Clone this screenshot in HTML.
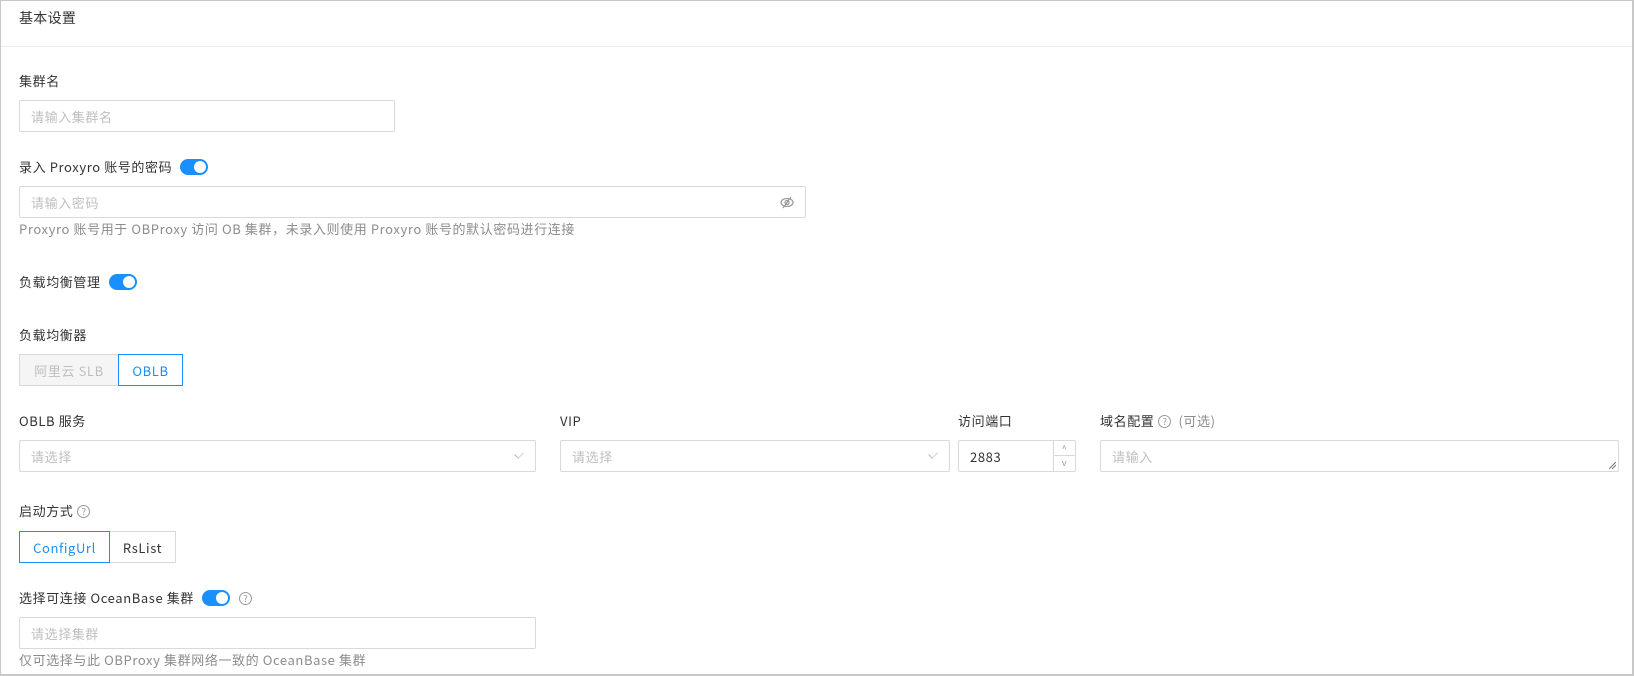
<!DOCTYPE html>
<html><head><meta charset="utf-8"><style>
*{box-sizing:border-box;margin:0;padding:0}
body{width:1634px;height:676px;background:#fff;font-family:"Noto Sans CJK SC","Liberation Sans",sans-serif;font-size:13px;color:#333;position:relative;overflow:hidden;letter-spacing:0.6px}
.frame{position:absolute;left:0;top:0;width:1634px;height:676px;border:1px solid #c8c8c8;border-right-width:2px;border-bottom-width:2px}
.abs{position:absolute}
.lbl{position:absolute;line-height:18px;color:#333;white-space:nowrap;display:flex;align-items:center}
.inp{position:absolute;border:1px solid #d9d9d9;border-radius:2px;background:#fff;color:#bfbfbf;padding-left:11px;display:flex;align-items:center}
.help{position:absolute;color:#8c8c8c;line-height:18px;white-space:nowrap}
.tog{position:relative;display:inline-block;width:28px;height:16px;border-radius:8px;background:#1890ff;margin-left:8px}
.tog::after{content:"";position:absolute;right:2px;top:2px;width:12px;height:12px;border-radius:50%;background:#fff}
.q{display:inline-block;width:13px;height:13px;border:1px solid #999;border-radius:50%;font-size:9px;line-height:11px;text-align:center;color:#999;margin-left:4px;letter-spacing:0}
.btn{position:absolute;border:1px solid #d9d9d9;display:flex;align-items:center;justify-content:center;background:#fff}
.chev{position:absolute;right:12px;top:9px;width:8px;height:8px;border-right:1px solid #bbb;border-bottom:1px solid #bbb;transform:rotate(45deg) scaleX(.7)}
</style></head><body>
<div class="frame"></div>
<div class="lbl" style="left:19px;top:9px;font-size:14px;letter-spacing:0.3px">基本设置</div>
<div class="abs" style="left:1px;top:46px;width:1631px;height:1px;background:#ececec"></div>

<div class="lbl" style="left:19px;top:72px">集群名</div>
<div class="inp" style="left:19px;top:100px;width:376px;height:32px">请输入集群名</div>

<div class="lbl" style="left:19px;top:158px">录入 Proxyro 账号的密码<span class="tog"></span></div>
<div class="inp" style="left:19px;top:186px;width:787px;height:32px">请输入密码
<svg style="position:absolute;right:11px;top:9px" width="14" height="13" viewBox="0 0 14 13"><ellipse cx="7" cy="6.5" rx="6" ry="4" fill="none" stroke="#999" stroke-width="1.2"/><circle cx="7" cy="6.5" r="2" fill="none" stroke="#999" stroke-width="1.2"/><line x1="11" y1="1" x2="3" y2="12" stroke="#999" stroke-width="1.2"/></svg></div>
<div class="help" style="left:19px;top:220px">Proxyro 账号用于 OBProxy 访问 OB 集群，未录入则使用 Proxyro 账号的默认密码进行连接</div>

<div class="lbl" style="left:19px;top:273px">负载均衡管理<span class="tog"></span></div>

<div class="lbl" style="left:19px;top:326px">负载均衡器</div>
<div class="btn" style="left:19px;top:354px;width:100px;height:32px;background:#f5f5f5;color:#bfbfbf">阿里云 SLB</div>
<div class="btn" style="left:118px;top:354px;width:65px;height:32px;border-color:#1890ff;color:#1890ff">OBLB</div>

<div class="lbl" style="left:19px;top:412px">OBLB 服务</div>
<div class="lbl" style="left:560px;top:412px">VIP</div>
<div class="lbl" style="left:958px;top:412px">访问端口</div>
<div class="lbl" style="left:1100px;top:412px">域名配置<span class="q">?</span>&nbsp;&nbsp;<span style="color:#8c8c8c">(可选)</span></div>
<div class="inp" style="left:19px;top:440px;width:517px;height:32px">请选择<span class="chev"></span></div>
<div class="inp" style="left:560px;top:440px;width:390px;height:32px">请选择<span class="chev"></span></div>
<div class="inp" style="left:958px;top:440px;width:118px;height:32px;color:#333">2883
<div class="abs" style="right:0;top:0;width:22px;height:30px;border-left:1px solid #d9d9d9;font-size:9px;color:#999;text-align:center"><div style="height:15px;border-bottom:1px solid #d9d9d9;line-height:15px">^</div><div style="line-height:14px">v</div></div></div>
<div class="inp" style="left:1100px;top:440px;width:519px;height:32px">请输入
<svg style="position:absolute;right:2px;bottom:2px" width="7" height="7"><line x1="0" y1="7" x2="7" y2="0" stroke="#777"/><line x1="3" y1="7" x2="7" y2="3" stroke="#777"/></svg></div>

<div class="lbl" style="left:19px;top:502px">启动方式<span class="q">?</span></div>
<div class="btn" style="left:109px;top:531px;width:67px;height:32px;color:#333">RsList</div>
<div class="btn" style="left:19px;top:531px;width:91px;height:32px;border-color:#1890ff;color:#1890ff">ConfigUrl</div>

<div class="lbl" style="left:19px;top:589px">选择可连接 OceanBase 集群<span class="tog"></span><span class="q" style="margin-left:9px">?</span></div>
<div class="inp" style="left:19px;top:617px;width:517px;height:32px">请选择集群</div>
<div class="help" style="left:19px;top:651px">仅可选择与此 OBProxy 集群网络一致的 OceanBase 集群</div>
</body></html>
